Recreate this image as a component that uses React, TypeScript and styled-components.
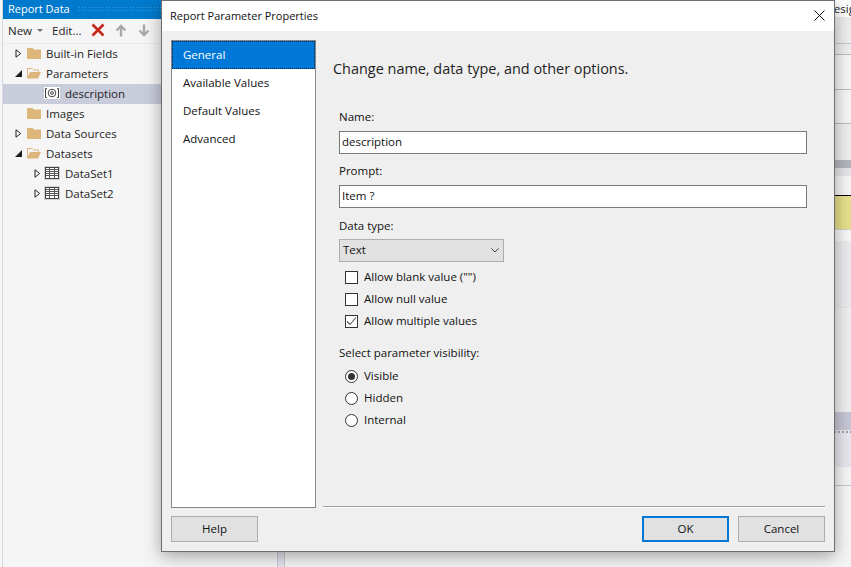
import React from "react";
import styled, { createGlobalStyle } from "styled-components";

const FONT = `"Open Sans", "Noto Sans", sans-serif`;

const GlobalStyle = createGlobalStyle`
    html, body {
        margin: 0;
        padding: 0;
        height: 100%;
        overflow: hidden;
        background: #f5f5f5;
        font-family: ${FONT};
        font-size: 11.5px;
        color: #1e1e1e;
    }
    * { box-sizing: border-box; }
`;

type TreeItem = {
    label: string;
    depth: number;
    icon: "folder" | "open" | "param" | "table";
    arrow?: "closed" | "open";
    selected?: boolean;
};

const TREE: TreeItem[] = [
    { label: "Built-in Fields", depth: 0, icon: "folder", arrow: "closed" },
    { label: "Parameters", depth: 0, icon: "open", arrow: "open" },
    { label: "description", depth: 1, icon: "param", selected: true },
    { label: "Images", depth: 0, icon: "folder" },
    { label: "Data Sources", depth: 0, icon: "folder", arrow: "closed" },
    { label: "Datasets", depth: 0, icon: "open", arrow: "open" },
    { label: "DataSet1", depth: 1, icon: "table", arrow: "closed" },
    { label: "DataSet2", depth: 1, icon: "table", arrow: "closed" },
];

const STRIPES: { h: number; c: string; line?: string; dots?: boolean }[] = [
    { h: 17, c: "#ffffff" },
    { h: 27, c: "#eeeeee", line: "#c6c6d6" },
    { h: 11, c: "#eeeeee", line: "#bbbbbb" },
    { h: 35, c: "#f5f5f5", line: "#bbbbbb" },
    { h: 34, c: "#f5f5f5", line: "#bbbbbb" },
    { h: 36, c: "#eeeeee" },
    { h: 8, c: "#b4b4bc" },
    { h: 8, c: "#e6e6ea" },
    { h: 20, c: "#f5f5f5", line: "#000000" },
    { h: 34, c: "#e6df8a", line: "#cfcfcf" },
    { h: 11, c: "#f7f7f7" },
    { h: 67, c: "#ebebee", line: "#e4e4e4" },
    { h: 104, c: "#efeff1" },
    { h: 18, c: "#c6c6d6" },
    { h: 37, c: "#e6e6ec", dots: true },
    { h: 19, c: "#f5f5f5", line: "#c6c6d6" },
    { h: 80, c: "#f5f5f5" },
];

const FolderIcon = ({ open }: { open?: boolean }) => (
    <svg width="14" height="12" viewBox="0 0 14 12">
        {open ? (
            <>
                <path d="M0.5 11V1.5h4.5l1.5 1.5h5V5" fill="none" stroke="#dcb67a" />
                <path d="M0 11.5L3 5h11l-3 6.5z" fill="#dcb67a" />
            </>
        ) : (
            <path d="M0 1h5.5l1.5 1.5h7V12H0z" fill="#dcb67a" />
        )}
    </svg>
);

const ParamIcon = () => (
    <svg width="16" height="12" viewBox="0 0 16 12">
        <rect width="16" height="12" fill="#ffffff" />
        <path d="M3 1.5H1.5v9H3M13 1.5h1.5v9H13" fill="none" stroke="#424242" />
        <circle cx="8" cy="6" r="3.8" fill="none" stroke="#424242" />
        <circle cx="8" cy="6" r="1.4" fill="none" stroke="#424242" />
    </svg>
);

const TableIcon = () => (
    <svg width="16" height="14" viewBox="0 0 16 14">
        <rect x="0.5" y="0.5" width="15" height="13" fill="#ffffff" stroke="#d4d4d4" />
        <rect x="1.5" y="1.5" width="13" height="11" fill="#ffffff" stroke="#424242" />
        <path d="M2 3.5h12M2 5.5h12M2 7.5h12M2 9.5h12M5.5 2v10M10.5 2v10" stroke="#555555" />
    </svg>
);

const Arrow = ({ kind }: { kind?: "closed" | "open" }) => (
    <ArrowBox>
        {kind === "closed" && (
            <svg width="7" height="9" viewBox="0 0 7 9">
                <path d="M1 0.8L5.6 4.5 1 8.2z" fill="#ffffff" stroke="#1e1e1e" />
            </svg>
        )}
        {kind === "open" && (
            <svg width="7" height="7" viewBox="0 0 7 7">
                <path d="M7 0v7H0z" fill="#1e1e1e" />
            </svg>
        )}
    </ArrowBox>
);

const Check = ({ checked, label }: { checked?: boolean; label: string }) => (
    <OptionRow>
        <CheckBox>
            {checked && (
                <svg width="11" height="11" viewBox="0 0 11 11">
                    <path d="M1 5.5l3 3L10 1.5" fill="none" stroke="#555555" strokeWidth="1.1" />
                </svg>
            )}
        </CheckBox>
        <OptionText>{label}</OptionText>
    </OptionRow>
);

const Radio = ({ checked, label }: { checked?: boolean; label: string }) => (
    <OptionRow>
        <RadioDot $checked={checked} />
        <OptionText>{label}</OptionText>
    </OptionRow>
);

const App = () => {
    return (
        <Page>
            <GlobalStyle />
            <ReportPanel>
                <PanelTitle>
                    Report Data
                    <TitleDots />
                </PanelTitle>
                <Toolbar>
                    <ToolText>New</ToolText>
                    <Caret />
                    <ToolText $gap={9}>Edit...</ToolText>
                    <ToolIcon $gap={9}>
                        <svg width="14" height="14" viewBox="0 0 14 14">
                            <path d="M1.5 1.5l11 11M12.5 1.5l-11 11" stroke="#c4281c" strokeWidth="2.6" />
                        </svg>
                    </ToolIcon>
                    <ToolIcon $gap={10}>
                        <svg width="12" height="13" viewBox="0 0 12 13">
                            <path d="M6 12.5V2M1.5 6.5L6 2l4.5 4.5" fill="none" stroke="#a8a8a8" strokeWidth="2.4" />
                        </svg>
                    </ToolIcon>
                    <ToolIcon $gap={11}>
                        <svg width="12" height="13" viewBox="0 0 12 13">
                            <path d="M6 0.5V11M1.5 6.5L6 11l4.5-4.5" fill="none" stroke="#a8a8a8" strokeWidth="2.4" />
                        </svg>
                    </ToolIcon>
                </Toolbar>
                {TREE.map((item) => (
                    <TreeRow key={item.label} $selected={item.selected} $depth={item.depth}>
                        <Arrow kind={item.arrow} />
                        <TreeIcon $depth={item.depth}>
                            {item.icon === "folder" && <FolderIcon />}
                            {item.icon === "open" && <FolderIcon open />}
                            {item.icon === "param" && <ParamIcon />}
                            {item.icon === "table" && <TableIcon />}
                        </TreeIcon>
                        {item.label}
                    </TreeRow>
                ))}
            </ReportPanel>
            <Splitter />
            <Designer>
                <DesignTab>Design</DesignTab>
                {STRIPES.map((s, i) => (
                    <Stripe key={i} $h={s.h} $c={s.c} $line={s.line} $dots={s.dots} />
                ))}
            </Designer>

            <Dialog>
                <DialogTitle>
                    Report Parameter Properties
                    <CloseButton aria-label="Close">
                        <svg width="11" height="11" viewBox="0 0 11 11">
                            <path d="M0.5 0.5l10 10M10.5 0.5l-10 10" stroke="#111111" />
                        </svg>
                    </CloseButton>
                </DialogTitle>
                <DialogBody>
                    <SideColumn>
                        <NavList>
                            <NavItem $active>General</NavItem>
                            <NavItem>Available Values</NavItem>
                            <NavItem>Default Values</NavItem>
                            <NavItem>Advanced</NavItem>
                        </NavList>
                        <DialogButton>Help</DialogButton>
                    </SideColumn>
                    <MainColumn>
                        <Heading>Change name, data type, and other options.</Heading>
                        <Form>
                            <FieldLabel>Name:</FieldLabel>
                            <TextInput readOnly value="description" />
                            <FieldLabel $top={9}>Prompt:</FieldLabel>
                            <TextInput readOnly value="Item ?" />
                            <FieldLabel $top={10} $bottom={5}>Data type:</FieldLabel>
                            <SelectBox>
                                <OptionText>Text</OptionText>
                                <svg width="8" height="5" viewBox="0 0 8 5">
                                    <path d="M0.4 0.4L4 4l3.6-3.6" fill="none" stroke="#444444" />
                                </svg>
                            </SelectBox>
                            <Options>
                                <Check label={'Allow blank value ("")'} />
                                <Check label="Allow null value" />
                                <Check checked label="Allow multiple values" />
                            </Options>
                            <FieldLabel $top={13} $bottom={0}>Select parameter visibility:</FieldLabel>
                            <Options>
                                <Radio checked label="Visible" />
                                <Radio label="Hidden" />
                                <Radio label="Internal" />
                            </Options>
                        </Form>
                        <Footer>
                            <DialogButton $primary>OK</DialogButton>
                            <DialogButton>Cancel</DialogButton>
                        </Footer>
                    </MainColumn>
                </DialogBody>
            </Dialog>
        </Page>
    );
};

const Page = styled.div`
    position: relative;
    display: flex;
    width: 851px;
    height: 567px;
    overflow: hidden;
    background: #f5f5f5;
`;

const ReportPanel = styled.section`
    width: 275px;
    margin-left: 2px;
    border-left: 1px solid #d6d6e4;
    background: #f5f5f5;
`;

const PanelTitle = styled.header`
    display: flex;
    align-items: center;
    height: 19px;
    padding: 0 0 2px 5px;
    background: #007acc;
    color: #ffffff;
    font-size: 11px;
`;

const TitleDots = styled.span`
    flex: 1;
    height: 5px;
    margin-left: 8px;
    background-image: radial-gradient(#3f9bd9 0.7px, transparent 0.8px);
    background-size: 3px 3px;
`;

const Toolbar = styled.div`
    display: flex;
    align-items: center;
    height: 25px;
    padding: 0 0 2px 5px;
    border-bottom: 1px solid #ececec;
`;

const ToolText = styled.span<{ $gap?: number }>`
    margin-left: ${(p) => p.$gap ?? 0}px;
`;

const Caret = styled.span`
    width: 0;
    height: 0;
    margin-left: 5px;
    border-left: 3px solid transparent;
    border-right: 3px solid transparent;
    border-top: 3px solid #717171;
`;

const ToolIcon = styled.span<{ $gap: number }>`
    display: flex;
    margin-left: ${(p) => p.$gap}px;
`;

const TreeRow = styled.div<{ $selected?: boolean; $depth: number }>`
    display: flex;
    align-items: center;
    height: 20px;
    padding: 0 0 2px ${(p) => 11 + p.$depth * 19}px;
    background: ${(p) => (p.$selected ? "#c9ccdb" : "transparent")};
    color: #1e1e1e;
`;

const ArrowBox = styled.span`
    display: flex;
    justify-content: center;
    align-items: center;
    width: 8px;
    height: 18px;
`;

const TreeIcon = styled.span<{ $depth: number }>`
    display: flex;
    margin-left: ${(p) => (p.$depth ? 3 : 5)}px;
    margin-right: 5px;
`;

const Splitter = styled.div`
    width: 8px;
    background: #e4e4ec;
    border-left: 1px solid #c9c9d9;
    border-right: 1px solid #c9c9d9;
`;

const Designer = styled.div`
    flex: 1;
    position: relative;
    display: flex;
    flex-direction: column;
`;

const DesignTab = styled.span`
    position: absolute;
    top: 0;
    right: -11px;
    line-height: 17px;
    color: #1e1e1e;
`;

const Stripe = styled.div<{ $h: number; $c: string; $line?: string; $dots?: boolean }>`
    flex: none;
    height: ${(p) => p.$h}px;
    background-color: ${(p) => p.$c};
    background-image: ${(p) => (p.$dots ? "radial-gradient(#9a9aa2 0.7px, transparent 0.8px)" : "none")};
    background-size: 4px 4px;
    background-repeat: repeat-x;
    border-bottom: ${(p) => (p.$line ? `1px solid ${p.$line}` : "none")};
`;

const Dialog = styled.div`
    position: absolute;
    left: 161px;
    top: 0;
    display: flex;
    flex-direction: column;
    width: 674px;
    height: 552px;
    border: 1px solid #6e6e6e;
    background: #efefef;
    box-shadow: 0 4px 16px rgba(0, 0, 0, 0.35);
    color: #111111;
`;

const DialogTitle = styled.div`
    position: relative;
    display: flex;
    align-items: center;
    flex: none;
    height: 30px;
    padding: 0 0 2px 8px;
    background: #ffffff;
    font-size: 11px;
`;

const CloseButton = styled.span`
    position: absolute;
    right: 9px;
    top: 9px;
    display: flex;
`;

const DialogBody = styled.div`
    flex: 1;
    display: flex;
    padding: 9px 9px 9px 9px;
`;

const SideColumn = styled.div`
    display: flex;
    flex-direction: column;
    align-items: flex-start;
    width: 145px;
    margin-right: 7px;
`;

const NavList = styled.nav`
    width: 145px;
    height: 468px;
    margin-bottom: 8px;
    border: 1px solid #828790;
    background: #ffffff;
`;

const NavItem = styled.div<{ $active?: boolean }>`
    display: flex;
    align-items: center;
    height: 28px;
    padding: 0 0 2px 11px;
    background: ${(p) => (p.$active ? "#0078d7" : "transparent")};
    color: ${(p) => (p.$active ? "#ffffff" : "#111111")};
    outline: ${(p) => (p.$active ? "1px dotted #10243a" : "none")};
    outline-offset: -1px;
`;

const MainColumn = styled.div`
    flex: 1;
    display: flex;
    flex-direction: column;
`;

const Heading = styled.h1`
    margin: 19px 0 0 10px;
    font-size: 14.45px;
    font-weight: 400;
    line-height: 20px;
    color: #1e1e1e;
`;

const Form = styled.div`
    flex: 1;
    display: flex;
    flex-direction: column;
    align-items: flex-start;
    width: 468px;
    margin: 30px 0 0 16px;
`;

const FieldLabel = styled.label<{ $top?: number; $bottom?: number }>`
    height: 16px;
    line-height: 16px;
    margin-top: ${(p) => p.$top ?? 0}px;
    margin-bottom: ${(p) => p.$bottom ?? 6}px;
`;

const TextInput = styled.input`
    display: block;
    width: 468px;
    height: 23px;
    padding: 0 2px 2px;
    border: 1px solid #7a7a7a;
    border-radius: 0;
    outline: none;
    background: #ffffff;
    font: inherit;
    color: #111111;
`;

const SelectBox = styled.div`
    display: flex;
    justify-content: space-between;
    align-items: center;
    width: 165px;
    height: 23px;
    padding: 0 4px 1px 3px;
    border: 1px solid #adadad;
    background: #e1e1e1;
`;

const Options = styled.div`
    display: flex;
    flex-direction: column;
    margin-top: 4px;
    padding-left: 6px;
`;

const OptionRow = styled.div`
    display: flex;
    align-items: center;
    gap: 6px;
    height: 22px;
`;

const OptionText = styled.span`
    line-height: 16px;
`;

const CheckBox = styled.span`
    display: flex;
    justify-content: center;
    align-items: center;
    width: 13px;
    height: 13px;
    border: 1px solid #333333;
    background: #ffffff;
`;

const RadioDot = styled.span<{ $checked?: boolean }>`
    display: flex;
    justify-content: center;
    align-items: center;
    width: 13px;
    height: 13px;
    border: 1px solid #333333;
    border-radius: 50%;
    background: #ffffff;

    &::after {
        content: "";
        display: ${(p) => (p.$checked ? "block" : "none")};
        width: 7px;
        height: 7px;
        border-radius: 50%;
        background: #333333;
    }
`;

const Footer = styled.div`
    display: flex;
    justify-content: flex-end;
    gap: 9px;
    height: 36px;
    padding-top: 9px;
    border-top: 1px solid #a0a0a0;
    box-shadow: inset 0 1px 0 #ffffff;
`;

const DialogButton = styled.button<{ $primary?: boolean }>`
    width: 87px;
    height: 26px;
    padding: 0 0 2px;
    border: ${(p) => (p.$primary ? "2px solid #0078d7" : "1px solid #adadad")};
    border-radius: 0;
    background: #e1e1e1;
    font: inherit;
    color: #111111;
`;

export default App;
